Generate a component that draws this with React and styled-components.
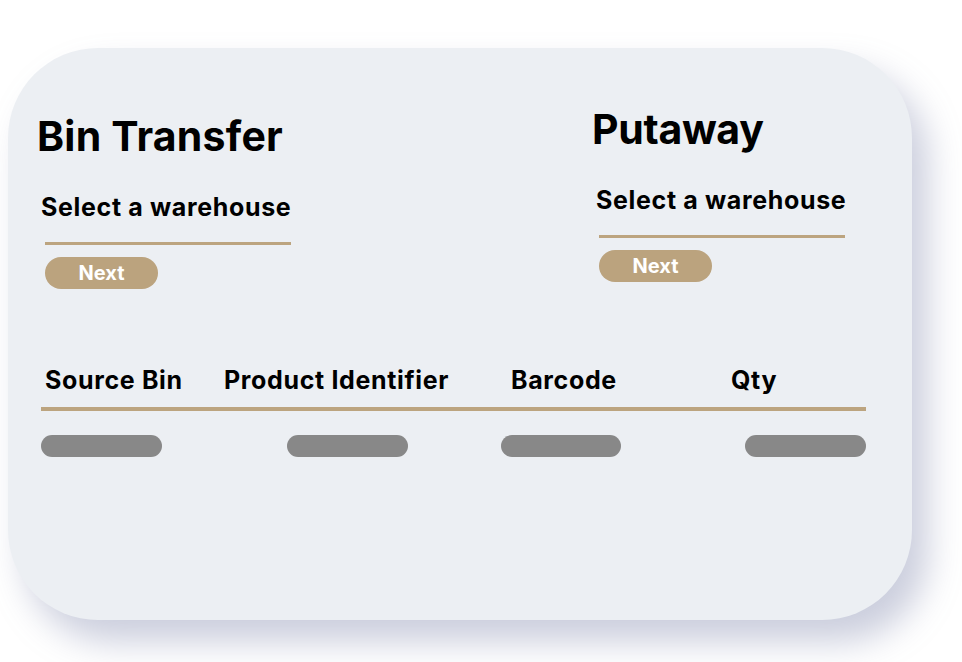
import React from "react";
import styled, { createGlobalStyle } from "styled-components";

const Global = createGlobalStyle`
  html, body { margin: 0; padding: 0; background: #ffffff; }
  body { font-family: Inter, "Noto Sans", "Liberation Sans", sans-serif; color: #000; }
`;

const Page = styled.div`
  width: 962px;
  height: 662px;
  padding: 48px 0 0 8px;
  box-sizing: border-box;
  overflow: hidden;
`;

const Card = styled.div`
  width: 904px;
  height: 572px;
  box-sizing: border-box;
  background: #eceff3;
  border-radius: 90px;
  box-shadow: 16px 22px 34px rgba(190, 194, 212, 0.8);
  padding: 57px 0 0 0;
  display: flex;
  flex-direction: column;
`;

const Top = styled.div`
  display: flex;
  align-items: flex-start;
`;

const Column = styled.div`
  display: flex;
  flex-direction: column;
  align-items: flex-start;
  margin-top: ${(p) => p.$top || 0}px;
  margin-left: ${(p) => p.$left || 0}px;
  width: 260px;
`;

const Title = styled.h1`
  margin: 0;
  font-size: 41px;
  line-height: 48px;
  font-weight: 700;
  letter-spacing: ${(p) => p.$spacing ?? 0.2}px;
  white-space: nowrap;
`;

const Label = styled.div`
  margin: 33px 0 0 ${(p) => p.$indent || 0}px;
  font-size: 25px;
  line-height: 29px;
  font-weight: 700;
  letter-spacing: 0.65px;
  white-space: nowrap;
`;

const Underline = styled.div`
  margin: 20px 0 0 ${(p) => p.$indent || 0}px;
  width: 246px;
  height: 3px;
  background: #bca47f;
`;

const NextButton = styled.button`
  margin: 12px 0 0 ${(p) => p.$indent || 0}px;
  width: 113px;
  height: 32px;
  border: none;
  border-radius: 16px;
  background: #bba37e;
  color: #ffffff;
  font-family: Inter, "Noto Sans", "Liberation Sans", sans-serif;
  font-size: 20px;
  font-weight: 700;
  line-height: 32px;
  padding: 0;
  cursor: pointer;
`;

const Table = styled.div`
  margin: 77px 0 0 33px;
  width: 825px;
  display: flex;
  flex-direction: column;
`;

const HeaderRow = styled.div`
  display: grid;
  grid-template-columns: 179px 287px 220px 1fr;
  padding-left: 4px;
`;

const HeaderCell = styled.div`
  font-size: 25px;
  line-height: 29px;
  font-weight: 700;
  letter-spacing: 0.65px;
  white-space: nowrap;
`;

const HeaderLine = styled.div`
  margin-top: 12px;
  height: 4px;
  background: #bca47f;
`;

const PillRow = styled.div`
  margin-top: 24px;
  display: flex;
`;

const Pill = styled.div`
  width: 121px;
  height: 22px;
  border-radius: 11px;
  background: #888888;
  margin-left: ${(p) => p.$gap || 0}px;
`;

function Section({ title, top, left, labelIndent, lineIndent, spacing }) {
  return (
    <Column $top={top} $left={left}>
      <Title $spacing={spacing}>{title}</Title>
      <Label $indent={labelIndent}>Select a warehouse</Label>
      <Underline $indent={lineIndent} />
      <NextButton $indent={lineIndent}>Next</NextButton>
    </Column>
  );
}

export default function App() {
  return (
    <>
      <Global />
      <Page>
        <Card>
          <Top>
            <Section title="Bin Transfer" top={7} left={29} labelIndent={4} lineIndent={8} spacing={0.2} />
            <Section title="Putaway" top={0} left={295} labelIndent={4} lineIndent={7} spacing={-0.3} />
          </Top>
          <Table>
            <HeaderRow>
              <HeaderCell>Source Bin</HeaderCell>
              <HeaderCell>Product Identifier</HeaderCell>
              <HeaderCell>Barcode</HeaderCell>
              <HeaderCell>Qty</HeaderCell>
            </HeaderRow>
            <HeaderLine />
            <PillRow>
              <Pill />
              <Pill $gap={125} />
              <Pill $gap={93} />
              <Pill $gap={124} />
            </PillRow>
          </Table>
        </Card>
      </Page>
    </>
  );
}
